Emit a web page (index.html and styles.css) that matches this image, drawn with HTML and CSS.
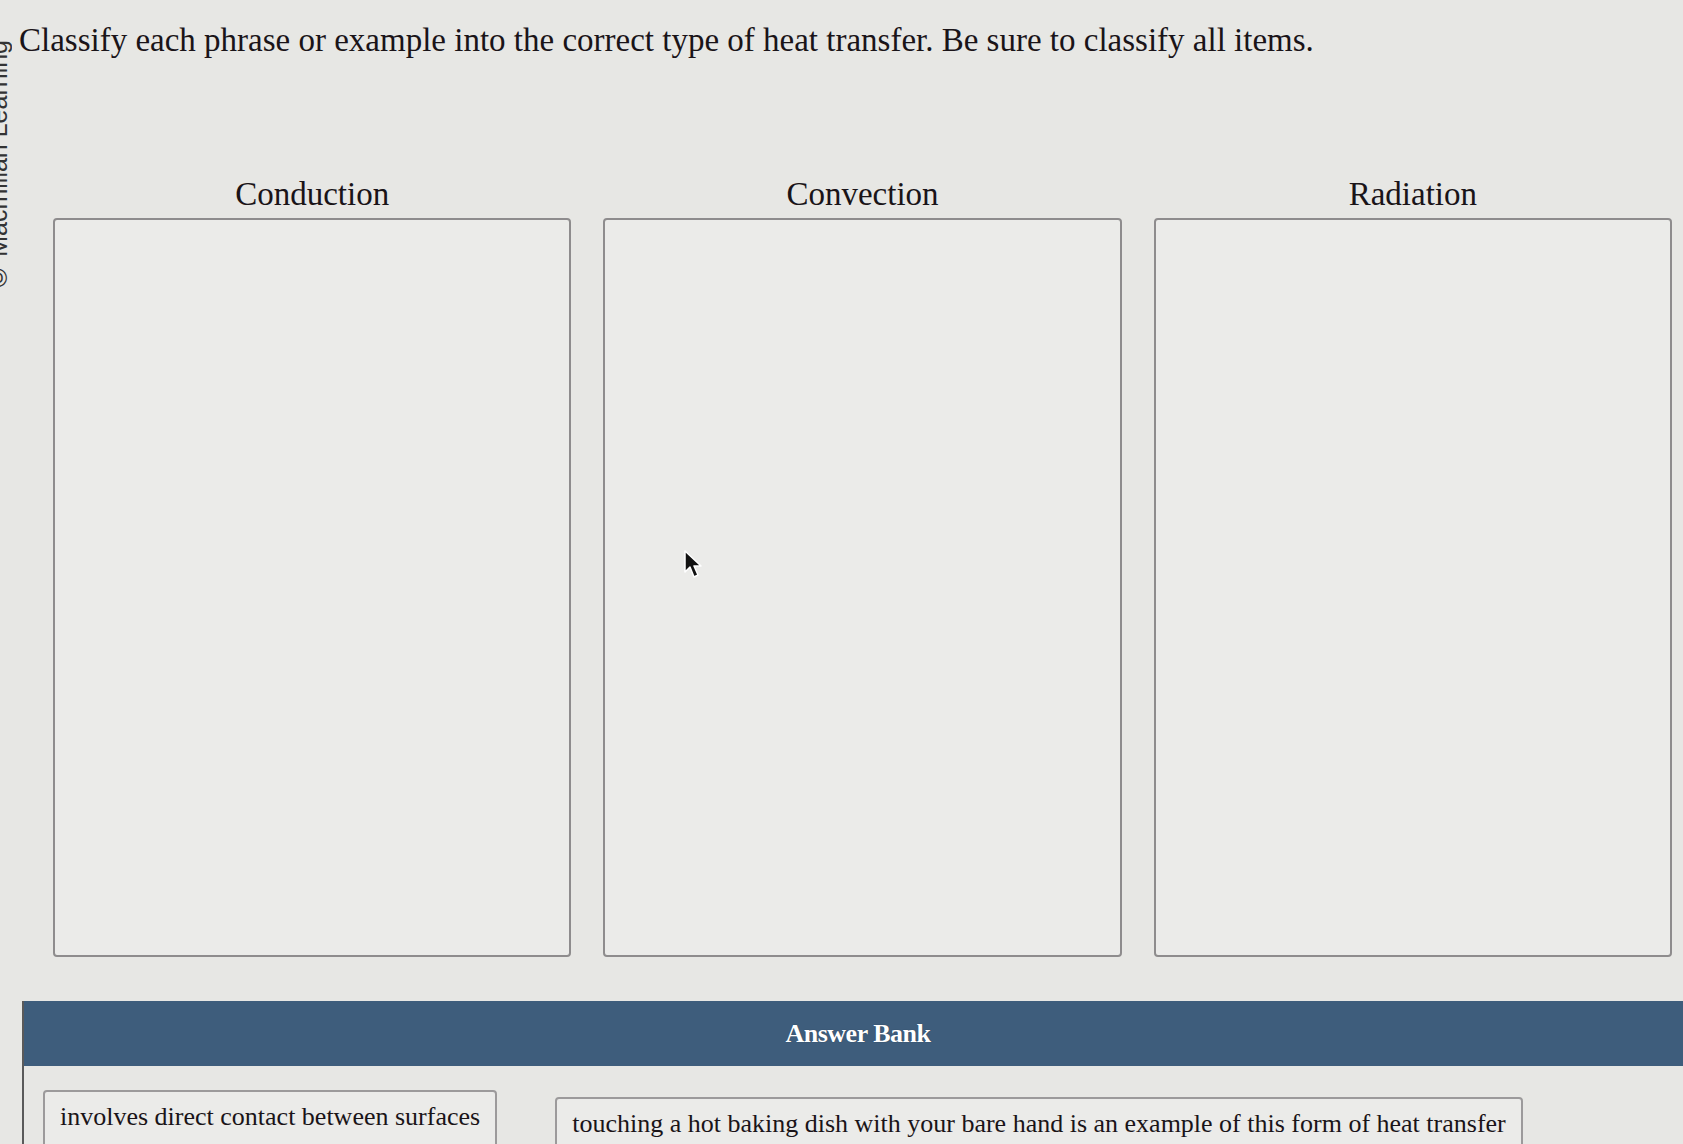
FILE: index.html
```html
<!DOCTYPE html>
<html>
<head>
<meta charset="utf-8">
<link rel="stylesheet" href="styles.css">
</head>
<body>
<div class="edge-label">© Macmillan Learning</div>
<main class="page">
  <h1 class="prompt">Classify each phrase or example into the correct type of heat transfer. Be sure to classify all items.</h1>
  <section class="columns">
    <div class="column">
      <h2 class="col-title">Conduction</h2>
      <div class="drop"></div>
    </div>
    <div class="column">
      <h2 class="col-title">Convection</h2>
      <div class="drop"></div>
    </div>
    <div class="column">
      <h2 class="col-title">Radiation</h2>
      <div class="drop"></div>
    </div>
  </section>
  <section class="bank">
    <div class="bank-head">Answer Bank</div>
    <div class="bank-items">
      <div class="item">involves direct contact between surfaces</div>
      <div class="item">touching a hot baking dish with your bare hand is an example of this form of heat transfer</div>
    </div>
  </section>
</main>
<svg class="cursor" width="22" height="30" viewBox="0 0 22 30">
  <path d="M2 1 L2 22 L7 17 L11 27 L15 25 L11 16 L18 16 Z" fill="#111" stroke="#fff" stroke-width="1.5" stroke-linejoin="round"/>
</svg>
</body>
</html>
```
FILE: styles.css
```css
html, body {
  margin: 0;
  padding: 0;
  height: 100%;
  overflow: hidden;
}
body {
  background: #e7e7e4;
  font-family: "Liberation Serif", "Times New Roman", serif;
  color: #1a1418;
  position: relative;
}
.page {
  padding: 0 11px 0 22px;
}
.prompt {
  margin: 0;
  padding: 20px 0 0 0;
  font-size: 33px;
  font-weight: normal;
  line-height: 40px;
  text-indent: -3px;
  white-space: nowrap;
}
.columns {
  display: grid;
  grid-template-columns: repeat(3, 1fr);
  column-gap: 32px;
  padding: 0 0 0 31px;
  margin-top: 115px;
}
.column {
  display: flex;
  flex-direction: column;
  align-items: stretch;
}
.col-title {
  margin: 0;
  font-size: 33px;
  font-weight: normal;
  line-height: 38px;
  text-align: center;
}
.drop {
  margin-top: 5px;
  height: 735px;
  border: 2px solid #8e8c8d;
  border-radius: 4px;
  background: #ebebe9;
}
.bank {
  margin-top: 44px;
  border-left: 2px solid #5a5a5a;
  height: 200px;
}
.bank-head {
  background: #3e5d7c;
  color: #fff;
  font-weight: bold;
  font-size: 26px;
  height: 65px;
  line-height: 65px;
  text-align: center;
  margin-right: -20px;
  letter-spacing: -0.5px;
  text-shadow: 0 0 1px rgba(0,0,0,0.4);
}
.bank-items {
  display: flex;
  gap: 58px;
  padding: 24px 0 0 19px;
  align-items: flex-start;
}
.item {
  border: 2px solid #9c9a9b;
  border-radius: 4px;
  background: #ebebe9;
  font-size: 26px;
  line-height: 30px;
  padding: 10px 15px 20px 15px;
  white-space: nowrap;
}
.item + .item {
  margin-top: 7px;
}
.edge-label {
  position: absolute;
  left: -15px;
  top: 40px;
  font-family: "Liberation Sans", Arial, sans-serif;
  font-size: 25px;
  line-height: 26px;
  color: #333;
  writing-mode: vertical-rl;
  transform: rotate(180deg);
  white-space: nowrap;
}
.cursor {
  position: absolute;
  left: 683px;
  top: 550px;
}
```
